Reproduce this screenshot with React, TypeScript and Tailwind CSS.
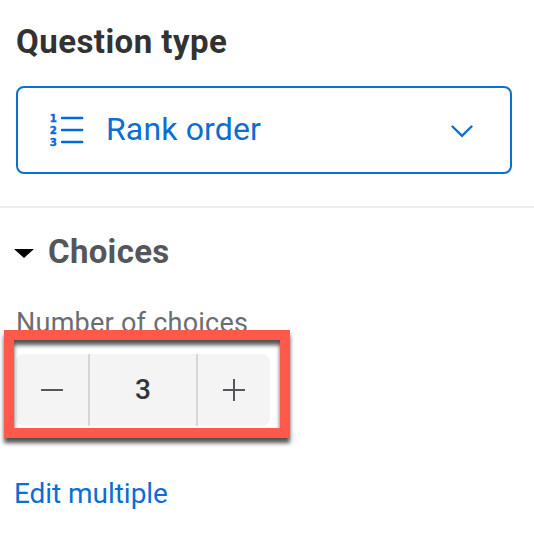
import React from 'react';

const RANK_ROWS = [
    { digit: '1', y: 8 },
    { digit: '2', y: 20 },
    { digit: '3', y: 32 },
];

function RankOrderIcon() {
    return (
        <svg width="34" height="40" viewBox="0 0 34 40" className="shrink-0 overflow-visible" aria-hidden="true">
            {RANK_ROWS.map(({ digit, y }) => (
                <g key={digit}>
                    <text x="-0.3" y={y + 3.8} fill="#0768dd" stroke="#0768dd" strokeWidth="0.4" fontSize="10.2" fontWeight="700" fontFamily='"DejaVu Sans", sans-serif'>{digit}</text>
                    <path d={`M12 ${y}H32.2`} stroke="#0768dd" strokeWidth="2.4" strokeLinecap="round" />
                </g>
            ))}
        </svg>
    );
}

function QuestionTypeSelect({ label }: { label: string }) {
    return (
        <button className="flex h-[88px] w-[496px] items-center rounded-lg border-2 border-[#0b6ed0] bg-white pr-[37px] pl-8 text-[#0b6ed0]">
            <RankOrderIcon />
            <span className="mb-0.5 ml-[22px] text-[32px] leading-10 tracking-[0.15px]">{label}</span>
            <svg width="22" height="14" viewBox="0 0 22 14" className="mt-0.5 ml-auto" fill="none" aria-hidden="true">
                <path d="M1.5 2.5L11 11.8L20.5 2.5" stroke="currentColor" strokeWidth="2.4" strokeLinecap="round" />
            </svg>
        </button>
    );
}

function ChoiceStepper({ value }: { value: number }) {
    return (
        <div className="relative ml-4 flex h-[72px] w-[254px]">
            <button className="flex w-[72px] items-center justify-center rounded-l-lg bg-[#f4f4f4]" aria-label="Remove choice">
                <span className="h-0.5 w-[22px] bg-[#54565b]" />
            </button>
            <div className="flex w-[110px] items-center justify-center border-x-2 border-[#d6d6d6] bg-[#f4f4f4] text-[28px] font-medium text-[#32363a]">
                {value}
            </div>
            <button className="flex w-[72px] items-center justify-center rounded-r-lg bg-[#f4f4f4]" aria-label="Add choice">
                <svg width="22" height="22" viewBox="0 0 22 22" aria-hidden="true">
                    <path d="M0 11H22M11 0V22" stroke="#54565b" strokeWidth="2" />
                </svg>
            </button>

            {/* Callout frame */}
            <div className="pointer-events-none absolute -top-6 -right-5 -bottom-3 -left-3 border-10 border-[#ff594c] drop-shadow-[0_5px_2px_rgba(0,0,0,0.68)]" />
        </div>
    );
}

export default function App() {
    return (
        <div className="flex h-[536px] w-[534px] flex-col overflow-hidden bg-white font-['Roboto',sans-serif]">
            <section className="h-[208px] border-b-2 border-[#ededed] px-4 pt-[22px]">
                <h2 className="mb-6 text-[33px] leading-10 font-bold tracking-[0.45px] text-[#323232]">Question type</h2>
                <QuestionTypeSelect label="Rank order" />
            </section>

            <section className="flex flex-col items-start pt-6">
                <div className="flex items-center pl-3.5">
                    <svg width="20" height="9" viewBox="0 0 20 9" className="mt-0.5" aria-hidden="true">
                        <path d="M0 0H20L10 9Z" fill="#000" />
                    </svg>
                    <h2 className="ml-3.5 text-[33px] leading-10 font-bold tracking-[0.3px] text-[#54565b]">Choices</h2>
                </div>
                <p className="mt-[35px] mb-[15px] pl-4 text-[27px] leading-8 tracking-[0.25px] text-[#6b6d70]">Number of choices</p>
                <ChoiceStepper value={3} />
                <a href="#" className="mt-[52px] ml-3.5 text-[28px] leading-8 tracking-[-0.05px] text-[#0b6ed0]">Edit multiple</a>
            </section>
        </div>
    );
}
